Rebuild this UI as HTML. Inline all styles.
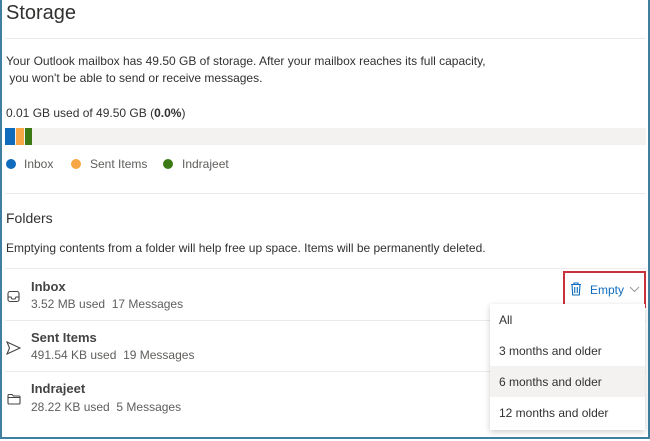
<!DOCTYPE html>
<html><head><style>
body{margin:0;width:650px;height:441px;overflow:hidden;background:#fff;font-family:"Liberation Sans",sans-serif;color:#323130;position:relative}
.frame{position:absolute;left:0;top:0;width:646px;height:437px;border:2px solid #3f7f9f;border-top:none}
.a{position:absolute;white-space:nowrap}
.hr{position:absolute;left:5px;right:4px;height:1px;background:#edebe9}
.s{font-size:12px}
.g{color:#605e5c}
</style></head><body>
<div class="frame"></div>
<div class="a" style="left:6px;top:2px;font-size:20px">Storage</div>
<div class="hr" style="top:38px"></div>
<div class="a s" style="left:6px;top:54px">Your Outlook mailbox has 49.50 GB of storage. After your mailbox reaches its full capacity,</div>
<div class="a s" style="left:6px;top:71px">&nbsp;you won't be able to send or receive messages.</div>
<div class="a s" style="left:6px;top:106px">0.01 GB used of 49.50 GB (<b>0.0%</b>)</div>
<div class="a" style="left:5px;top:128px;width:641px;height:17px;background:#f3f2f1"></div>
<div class="a" style="left:5px;top:128px;width:10px;height:17px;background:#0f6cbd"></div>
<div class="a" style="left:16px;top:128px;width:8px;height:17px;background:#f7a745"></div>
<div class="a" style="left:25px;top:128px;width:7px;height:17px;background:#3d7a15"></div>
<div class="a" style="left:6px;top:159px;width:10px;height:10px;border-radius:50%;background:#0f6cbd"></div>
<div class="a s g" style="left:24px;top:157px">Inbox</div>
<div class="a" style="left:71px;top:159px;width:10px;height:10px;border-radius:50%;background:#f7a745"></div>
<div class="a s g" style="left:90px;top:157px">Sent Items</div>
<div class="a" style="left:163px;top:159px;width:10px;height:10px;border-radius:50%;background:#3d7a15"></div>
<div class="a s g" style="left:182px;top:157px">Indrajeet</div>
<div class="hr" style="top:193px"></div>
<div class="a" style="left:6px;top:210px;font-size:14px">Folders</div>
<div class="a s" style="left:6px;top:241px">Emptying contents from a folder will help free up space. Items will be permanently deleted.</div>
<div class="hr" style="top:268px"></div>
<div class="hr" style="top:320px"></div>
<div class="hr" style="top:371px"></div>
<svg class="a" style="left:7px;top:290px" width="13" height="13" viewBox="0 0 13 13" fill="none" stroke="#444" stroke-width="1.1"><rect x="1" y="1.5" width="11" height="10" rx="2"/><path d="M1 7h3l1 2h3l1-2h3"/></svg>
<div class="a" style="left:31px;top:279px;font-size:13px;font-weight:bold;color:#444">Inbox</div>
<div class="a s g" style="left:31px;top:297px">3.52 MB used&nbsp; 17 Messages</div>
<svg class="a" style="left:6px;top:341px" width="15" height="14" viewBox="0 0 15 14" fill="none" stroke="#444" stroke-width="1.1"><path d="M1 1l13 6-13 6 2.5-6z"/></svg>
<div class="a" style="left:31px;top:330px;font-size:13px;font-weight:bold;color:#444">Sent Items</div>
<div class="a s g" style="left:31px;top:348px">491.54 KB used&nbsp; 19 Messages</div>
<svg class="a" style="left:7px;top:393px" width="14" height="12" viewBox="0 0 14 12" fill="none" stroke="#444" stroke-width="1.1"><path d="M1 2.5a1 1 0 0 1 1-1h3l1.5 1.5H12a1 1 0 0 1 1 1V10a1 1 0 0 1-1 1H2a1 1 0 0 1-1-1z M1 4.5h12"/></svg>
<div class="a" style="left:31px;top:381px;font-size:13px;font-weight:bold;color:#444">Indrajeet</div>
<div class="a s g" style="left:31px;top:400px">28.22 KB used&nbsp; 5 Messages</div>
<div class="a" style="left:563px;top:271px;width:79px;height:33px;border:2px solid #c8323c"></div>
<svg class="a" style="left:570px;top:282px" width="12" height="14" viewBox="0 0 12 14" fill="none" stroke="#0f6cbd" stroke-width="1.1"><path d="M1 2.5h10M4 2.5V1h4v1.5M2 2.5l.7 10.5h6.6L10 2.5M4.7 5v6M7.3 5v6"/></svg>
<div class="a" style="left:590px;top:283px;font-size:12px;color:#0f6cbd">Empty</div>
<svg class="a" style="left:629px;top:286px" width="11" height="7" viewBox="0 0 11 7" fill="none" stroke="#999" stroke-width="1"><path d="M1 1l4.5 4.5L10 1"/></svg>
<div class="a" style="left:490px;top:304px;width:155px;height:126px;background:#fff;box-shadow:0 2px 6px rgba(0,0,0,.2)"></div>
<div class="a" style="left:490px;top:366px;width:155px;height:31px;background:#f3f2f1"></div>
<div class="a s" style="left:499px;top:313px">All</div>
<div class="a s" style="left:499px;top:344px">3 months and older</div>
<div class="a s" style="left:499px;top:375px">6 months and older</div>
<div class="a s" style="left:499px;top:406px">12 months and older</div>
</body></html>
